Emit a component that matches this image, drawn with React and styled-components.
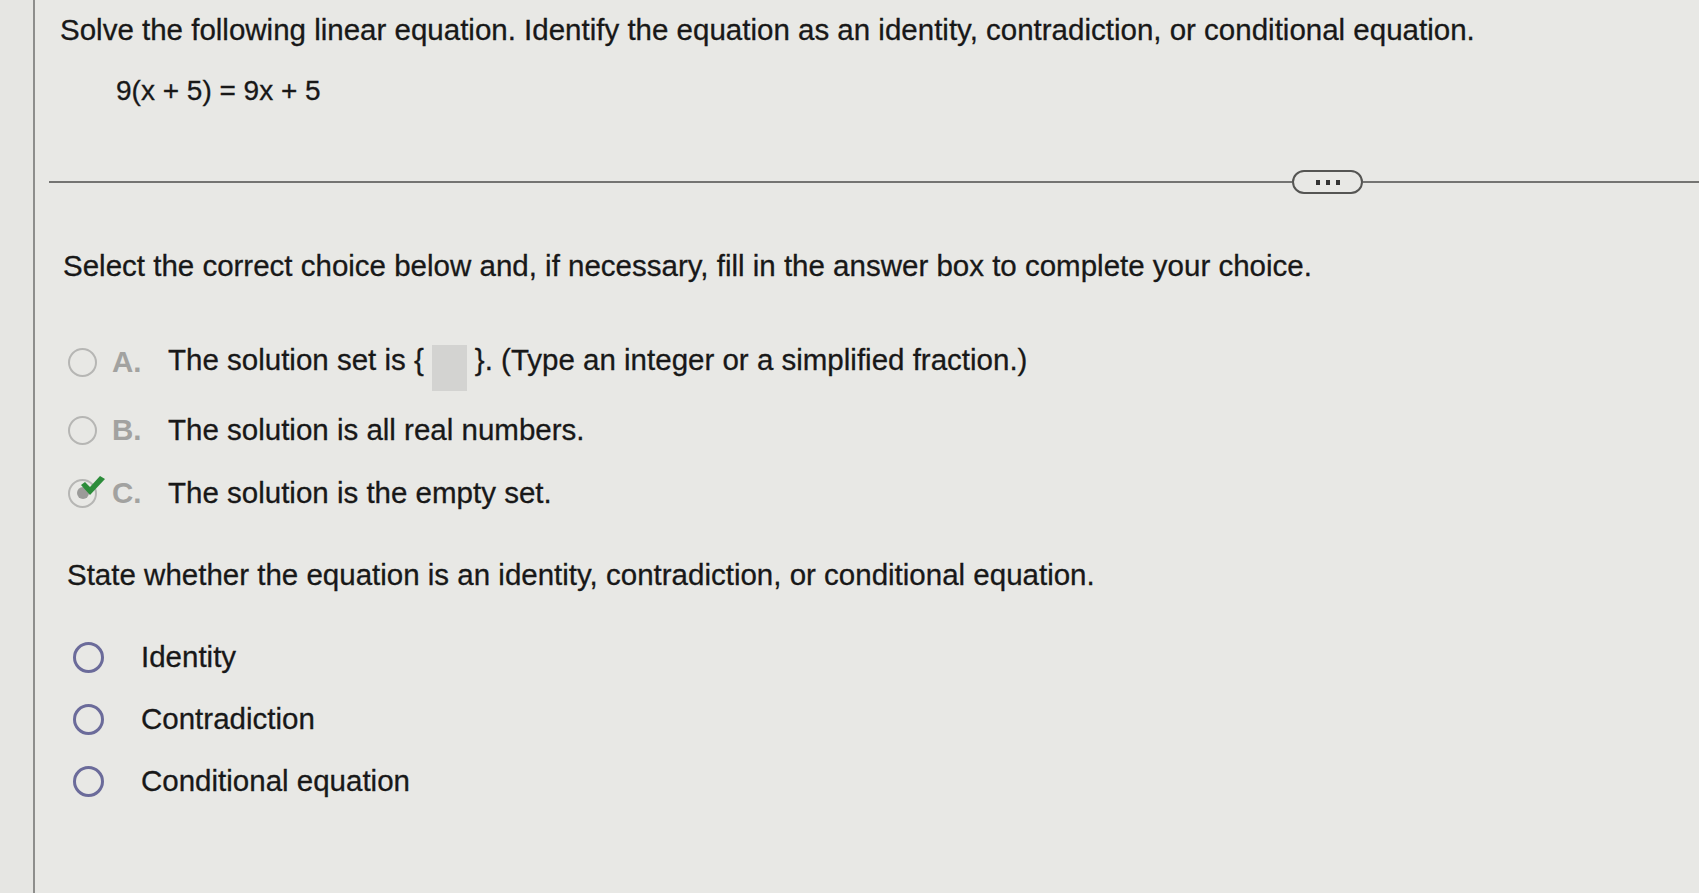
import styled, { createGlobalStyle } from "styled-components";

/* ---------------------------------- STYLE --------------------------------- */

const GlobalStyle = createGlobalStyle`
    html, body {
        margin: 0;
        padding: 0;
        background: #e8e8e5;
    }
    body {
        font-family: "Liberation Sans", Arial, sans-serif;
        color: #181818;
    }
`;

const Page = styled.div`
    display: flex;
    min-height: 100vh;
    background: #e8e8e5;
`;

const Gutter = styled.div`
    width: 33px;
    flex-shrink: 0;
    border-right: 2px solid #8e8e8c;
    background: #e6e6e3;
`;

const Main = styled.main`
    flex: 1;
    display: flex;
    flex-direction: column;
    padding-top: 12px;
    font-size: 29.5px;
    line-height: 36px;
    -webkit-text-stroke: 0.3px #181818;
`;

const Texte = styled.p`
    margin: ${props => props.top}px 0 0 ${props => props.left}px;
    white-space: nowrap;
`;

const Equation = styled.p`
    margin: 25px 0 0 81px;
    font-size: 28px;
    white-space: nowrap;
`;

const Separateur = styled.div`
    display: flex;
    align-items: center;
    height: 24px;
    margin: 61px 0 0 14px;
`;

const Trait = styled.div`
    height: 2px;
    background: #747472;
    flex: ${props => props.grow ? 1 : "none"};
    width: ${props => props.grow ? "auto" : `${props.width}px`};
`;

const Pilule = styled.div`
    width: 67px;
    height: 20px;
    border: 2.5px solid #555553;
    border-radius: 12px;
    display: flex;
    align-items: center;
    justify-content: center;
    gap: 6px;
`;

const Point = styled.span`
    width: 4px;
    height: 5px;
    background: #333;
`;

const Liste = styled.div`
    display: flex;
    flex-direction: column;
    gap: ${props => props.gap}px;
    margin: ${props => props.top}px 0 0 ${props => props.left}px;
`;

const Choix = styled.div`
    display: flex;
    align-items: center;
    min-height: ${props => props.tall ? 46 : 36}px;
    white-space: nowrap;
`;

const Radio = styled.span`
    position: relative;
    box-sizing: border-box;
    width: ${props => props.size}px;
    height: ${props => props.size}px;
    flex-shrink: 0;
    border-radius: 50%;
    border: ${props => props.actif ? "3px solid #6b6b9a" : "2.5px solid #b6b6b4"};
    margin-right: ${props => props.gap}px;
    display: flex;
    align-items: center;
    justify-content: center;
`;

const PointCoche = styled.span`
    width: 12px;
    height: 12px;
    border-radius: 50%;
    background: #9b9b99;
`;

const Coche = styled.svg`
    position: absolute;
    top: -6px;
    left: 10px;
    width: 26px;
    height: 22px;
`;

const Lettre = styled.span`
    width: 56px;
    font-weight: bold;
    color: #a2a2a0;
    -webkit-text-stroke: 0;
    flex-shrink: 0;
`;

const CaseReponse = styled.span`
    display: inline-block;
    width: 35px;
    height: 46px;
    margin: 0 8px;
    background: #d3d3d1;
    vertical-align: middle;
    position: relative;
    top: 6px;
`;

/* ----------------------------------- DOM ---------------------------------- */

const choixSolution = [
    { lettre: "A.", texte: null },
    { lettre: "B.", texte: "The solution is all real numbers." },
    { lettre: "C.", texte: "The solution is the empty set.", coche: true },
];

const types = ["Identity", "Contradiction", "Conditional equation"];

function App() {
    return (
        <Page>
            <GlobalStyle />
            <Gutter />
            <Main>
                <Texte top={0} left={25}>
                    Solve the following linear equation. Identify the equation as an identity, contradiction, or conditional equation.
                </Texte>
                <Equation>9(x + 5) = 9x + 5</Equation>

                <Separateur>
                    <Trait width={1243} />
                    <Pilule>
                        <Point /><Point /><Point />
                    </Pilule>
                    <Trait grow />
                </Separateur>

                <Texte top={54} left={28}>
                    Select the correct choice below and, if necessary, fill in the answer box to complete your choice.
                </Texte>

                <Liste top={55} left={33} gap={27}>
                    {choixSolution.map((choix) => (
                        <Choix key={choix.lettre} tall={!choix.texte}>
                            <Radio size={29} gap={15}>
                                {choix.coche && <PointCoche />}
                                {choix.coche &&
                                    <Coche viewBox="0 0 26 22">
                                        <path d="M1 10 L5 7 L10 12 L20 1 L25 4 L10 20 Z" fill="#2c8c3a" />
                                    </Coche>
                                }
                            </Radio>
                            <Lettre>{choix.lettre}</Lettre>
                            {choix.texte ?
                                <span>{choix.texte}</span>
                                :
                                <span>The solution set is {"{"}<CaseReponse />{"}"}. (Type an integer or a simplified fraction.)</span>
                            }
                        </Choix>
                    ))}
                </Liste>

                <Texte top={46} left={32}>
                    State whether the equation is an identity, contradiction, or conditional equation.
                </Texte>

                <Liste top={46} left={38} gap={26}>
                    {types.map((type) => (
                        <Choix key={type}>
                            <Radio size={31} gap={37} actif />
                            <span>{type}</span>
                        </Choix>
                    ))}
                </Liste>
            </Main>
        </Page>
    );
}

export default App;
